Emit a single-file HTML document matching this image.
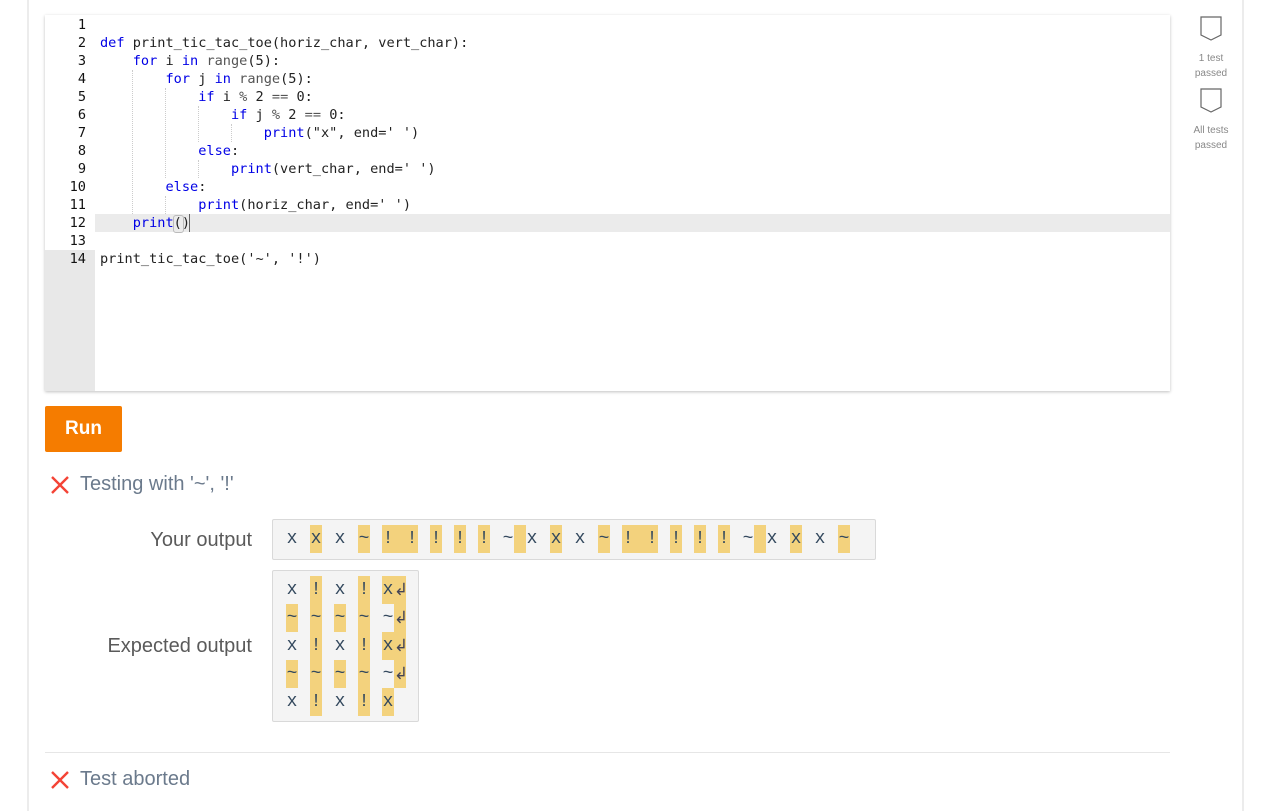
<!DOCTYPE html>
<html><head><meta charset="utf-8">
<style>
html,body{margin:0;padding:0;background:#fff;width:1280px;height:811px;overflow:hidden;}
body{position:relative;font-family:"Liberation Sans",sans-serif;}
.vl{position:absolute;top:0;height:811px;width:2px;background:#ececec;}
.ed{position:absolute;left:45px;top:15px;width:1125px;height:376px;background:#fff;box-shadow:0 1px 3px rgba(0,0,0,.25);}
.gut{position:absolute;left:0;top:235px;width:50px;height:141px;background:#e8e8e8;}
.hl{position:absolute;left:50px;top:199px;width:1075px;height:18px;background:#ebebeb;}
.ln{position:absolute;left:0;width:41px;text-align:right;font-family:"DejaVu Sans Mono","Liberation Mono",monospace;font-size:13.6px;line-height:18px;color:#111;}
.cd{position:absolute;left:55px;font-family:"DejaVu Sans Mono","Liberation Mono",monospace;font-size:13.6px;line-height:18px;color:#222;white-space:pre;}
.k{color:#0000e6}.g{color:#555}
.guide{position:absolute;border-left:1px dotted #ccc;}
.run{position:absolute;left:45px;top:406px;width:77px;height:46px;background:#f57c00;border-radius:2px;color:#fff;font-weight:bold;font-size:19px;line-height:46px;text-align:center;}
.x{position:absolute;width:20px;height:20px;}
.lbl{position:absolute;font-size:20px;color:#6b7a8c;}
.lab{position:absolute;font-size:20px;color:#5a5a5a;text-align:right;width:230px;left:22px;}
.box{position:absolute;background:#f4f4f4;border:1px solid #d9d9d9;border-radius:2px;}
.c{position:absolute;width:12px;text-align:center;font-family:"Liberation Mono",monospace;font-size:18px;color:#34495e;}
.h{position:absolute;background:#f3d27d;}
.side{position:absolute;left:1180px;width:62px;text-align:center;font-size:10px;color:#888;line-height:15px;}
</style></head><body>
<div class="vl" style="left:27px"></div>
<div class="vl" style="left:1242px"></div>

<div class="ed">
<div class="gut"></div>
<div class="hl"></div>
<div style="position:absolute;left:144px;top:199px;width:1px;height:18px;background:#666"></div>
<div style="position:absolute;left:128px;top:200px;width:9px;height:16px;border:1px solid #bbb;border-radius:3px"></div>
<div class="guide" style="left:87px;top:55px;height:144px"></div>
<div class="guide" style="left:120px;top:73px;height:90px"></div>
<div class="guide" style="left:120px;top:181px;height:18px"></div>
<div class="guide" style="left:153px;top:91px;height:36px"></div>
<div class="guide" style="left:153px;top:145px;height:18px"></div>
<div class="guide" style="left:186px;top:109px;height:18px"></div>
<div class="ln" style="top:1px">1<br>2<br>3<br>4<br>5<br>6<br>7<br>8<br>9<br>10<br>11<br>12<br>13<br>14</div>
<div class="cd" style="top:1px">
<span class="k">def</span> print_tic_tac_toe(horiz_char, vert_char):
    <span class="k">for</span> i <span class="k">in</span> <span class="g">range</span>(5):
        <span class="k">for</span> j <span class="k">in</span> <span class="g">range</span>(5):
            <span class="k">if</span> i <span class="g">%</span> 2 <span class="g">==</span> 0:
                <span class="k">if</span> j <span class="g">%</span> 2 <span class="g">==</span> 0:
                    <span class="k">print</span>("x", end=' ')
            <span class="k">else</span>:
                <span class="k">print</span>(vert_char, end=' ')
        <span class="k">else</span>:
            <span class="k">print</span>(horiz_char, end=' ')
    <span class="k">print</span>()

print_tic_tac_toe('~', '!')</div>
</div>

<div class="side" style="top:16px"><svg width="22" height="26" viewBox="0 0 22 26"><path d="M1 1H21V19L11 24L1 19Z" fill="none" stroke="#666" stroke-width="1.2"/></svg><div style="margin-top:4px">1 test<br>passed</div></div>
<div class="side" style="top:88px"><svg width="22" height="26" viewBox="0 0 22 26"><path d="M1 1H21V19L11 24L1 19Z" fill="none" stroke="#666" stroke-width="1.2"/></svg><div style="margin-top:4px">All tests<br>passed</div></div>

<div class="run">Run</div>

<svg class="x" style="left:50px;top:475px" viewBox="0 0 20 20"><path d="M2 2L18 18M18 2L2 18" stroke="#f44336" stroke-width="2.4"/></svg>
<div class="lbl" style="left:80px;top:473px">Testing with '~', '!'</div>

<div class="lab" style="top:529px">Your output</div>
<div class="lab" style="top:635px">Expected output</div>

<div class="box" style="left:272px;top:519px;width:602px;height:39px"></div>
<div class="box" style="left:272px;top:570px;width:145px;height:150px"></div>

<div id="o"></div>

<div style="position:absolute;left:45px;top:752px;width:1125px;height:1px;background:#e6e6e6"></div>
<svg class="x" style="left:50px;top:770px" viewBox="0 0 20 20"><path d="M2 2L18 18M18 2L2 18" stroke="#f44336" stroke-width="2.4"/></svg>
<div class="lbl" style="left:80px;top:768px">Test aborted</div>

<script>
(function(){
var o=document.getElementById('o'),h='';
function cx(k){return 286+12*k;}
var s="x x x ~ ! ! ! ! ! ~ x x x ~ ! ! ! ! ! ~ x x x ~";
var hi=[2,6,8,9,10,12,14,16,19,22,26,28,29,30,32,34,36,39,42,46];
hi.forEach(function(k){h+='<div class="h" style="left:'+cx(k)+'px;top:525px;width:12px;height:28px"></div>';});
for(var k=0;k<s.length;k++){if(s[k]!=' ')h+='<div class="c" style="left:'+cx(k)+'px;top:529px">'+s[k]+'</div>';}
h+='<div class="h" style="left:'+cx(2)+'px;top:576px;width:12px;height:140px"></div>';
h+='<div class="h" style="left:'+cx(6)+'px;top:576px;width:12px;height:140px"></div>';
var rows=["x ! x ! x\u21b2","~ ~ ~ ~ ~\u21b2","x ! x ! x\u21b2","~ ~ ~ ~ ~\u21b2","x ! x ! x"];
for(var r=0;r<5;r++){var ty=576+r*28;
 if(r%2==0){h+='<div class="h" style="left:'+cx(8)+'px;top:'+ty+'px;width:'+(r<4?24:12)+'px;height:28px"></div>';}
 else{[0,4,9].forEach(function(k){h+='<div class="h" style="left:'+cx(k)+'px;top:'+ty+'px;width:12px;height:28px"></div>';});}
 var t=rows[r];for(var k=0;k<t.length;k++){if(t[k]!=' ')h+='<div class="c" style="left:'+cx(k)+'px;top:'+(ty+4)+'px'+(t[k]=='\u21b2'?';font-family:DejaVu Sans,sans-serif;font-size:17px;color:#445':'')+'">'+t[k]+'</div>';}
}
o.innerHTML=h;
})();
</script>
</body></html>
